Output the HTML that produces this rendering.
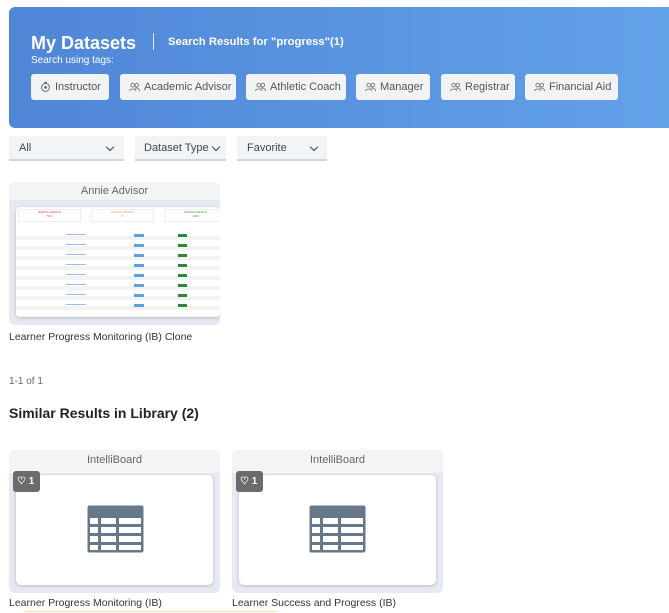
<!DOCTYPE html>
<html><head><style>
*{box-sizing:border-box;margin:0;padding:0}
body{width:669px;height:613px;overflow:hidden;background:#fff;font-family:"Liberation Sans",sans-serif;color:#333;position:relative}
.ab{position:absolute}
.banner{left:9px;top:7px;width:680px;height:121px;border-radius:6px;background:linear-gradient(90deg,#4f86d6,#64a2ea)}
.tag{position:absolute;top:74px;height:26px;background:#f2f3f5;border-radius:3px;font-size:11px;color:#555;line-height:27px;padding-left:9px;white-space:nowrap}
.tag svg{vertical-align:-2px;margin-right:4px}
.sel{position:absolute;top:136px;height:25px;background:#f3f4f6;border-bottom:2px solid #cfd5dd;font-size:11px;color:#444;line-height:24px;padding-left:10px}
.sel .ch{position:absolute;right:10px;top:8px;width:6px;height:6px;border-right:1.5px solid #444;border-bottom:1.5px solid #444;transform:rotate(45deg)}
.card{position:absolute;width:211px;height:143px;background:#e6e9f2;border-radius:6px;overflow:hidden}
.card .hd{height:18px;background:#f3f4f6;text-align:center;font-size:11px;color:#666;line-height:19px}
.inner{position:absolute;left:7px;top:25px;width:197px;height:110px;background:#fff;border-radius:5px;box-shadow:0 1px 3px rgba(0,0,0,.2)}
.heart{position:absolute;left:4px;top:21px;width:27px;height:21px;background:#6b6b6b;border-radius:3px;color:#fff;font-size:10px;font-weight:bold;line-height:21px;padding-left:4px}
.lbl{position:absolute;font-size:10.5px;color:#333;white-space:nowrap}
</style></head><body>
<div class="ab banner"></div>
<div class="ab" style="left:31px;top:33px;font-size:18px;font-weight:bold;color:#fff">My Datasets</div>
<div class="ab" style="left:153px;top:33px;width:1px;height:17px;background:#dfe9f7"></div>
<div class="ab" style="left:168px;top:36px;font-size:11.3px;font-weight:bold;color:#fff">Search Results for "progress"(1)</div>
<div class="ab" style="left:31px;top:55px;font-size:10px;color:#fff">Search using tags:</div>
<div class="tag" style="left:31px;width:78px"><svg width="11" height="11" viewBox="0 0 12 12"><circle cx="6" cy="7" r="4.3" fill="none" stroke="#666" stroke-width="1"/><rect x="4.5" y="1" width="3" height="1.5" fill="#666"/><circle cx="6" cy="7" r="1.5" fill="#666"/></svg>Instructor</div>
<div class="tag" style="left:120px;width:116px"><svg width="11" height="10" viewBox="0 0 12 10"><circle cx="4" cy="3" r="2" fill="none" stroke="#777"/><circle cx="8.5" cy="3" r="2" fill="none" stroke="#777"/><path d="M0.5 9.5c0-3 7-3 7 0M6 6.5c2-1 5.5 0 5.5 3" fill="none" stroke="#777"/></svg>Academic Advisor</div>
<div class="tag" style="left:246px;width:100px"><svg width="11" height="10" viewBox="0 0 12 10"><circle cx="4" cy="3" r="2" fill="none" stroke="#777"/><circle cx="8.5" cy="3" r="2" fill="none" stroke="#777"/><path d="M0.5 9.5c0-3 7-3 7 0M6 6.5c2-1 5.5 0 5.5 3" fill="none" stroke="#777"/></svg>Athletic Coach</div>
<div class="tag" style="left:356px;width:74px"><svg width="11" height="10" viewBox="0 0 12 10"><circle cx="4" cy="3" r="2" fill="none" stroke="#777"/><circle cx="8.5" cy="3" r="2" fill="none" stroke="#777"/><path d="M0.5 9.5c0-3 7-3 7 0M6 6.5c2-1 5.5 0 5.5 3" fill="none" stroke="#777"/></svg>Manager</div>
<div class="tag" style="left:441px;width:74px"><svg width="11" height="10" viewBox="0 0 12 10"><circle cx="4" cy="3" r="2" fill="none" stroke="#777"/><circle cx="8.5" cy="3" r="2" fill="none" stroke="#777"/><path d="M0.5 9.5c0-3 7-3 7 0M6 6.5c2-1 5.5 0 5.5 3" fill="none" stroke="#777"/></svg>Registrar</div>
<div class="tag" style="left:525px;width:93px"><svg width="11" height="10" viewBox="0 0 12 10"><circle cx="4" cy="3" r="2" fill="none" stroke="#777"/><circle cx="8.5" cy="3" r="2" fill="none" stroke="#777"/><path d="M0.5 9.5c0-3 7-3 7 0M6 6.5c2-1 5.5 0 5.5 3" fill="none" stroke="#777"/></svg>Financial Aid</div>

<div class="sel" style="left:9px;width:115px">All<span class="ch" style="right:11px"></span></div>
<div class="sel" style="left:135px;width:91px;padding-left:9px">Dataset Type<span class="ch" style="right:7px"></span></div>
<div class="sel" style="left:237px;width:90px">Favorite<span class="ch"></span></div>

<div class="card" style="left:9px;top:182px">
<div class="hd" style="font-size:11px">Annie Advisor</div>
<div class="ab" style="left:7px;top:25px;width:204px;height:110px;background:#fff;border-radius:4px;box-shadow:0 1px 3px rgba(0,0,0,.2);overflow:hidden">
<div class="ab" style="left:2px;top:2px;width:63px;height:13px;border:1px solid #eee;font-size:3px;color:#d44;text-align:center">ENROLLMENTS<br><span style="color:#d44">543</span></div>
<div class="ab" style="left:75px;top:2px;width:63px;height:13px;border:1px solid #eee;font-size:3px;color:#e9a33a;text-align:center">ENROLLMENTS<br>76</div>
<div class="ab" style="left:148px;top:2px;width:63px;height:13px;border:1px solid #eee;font-size:3px;color:#3a3;text-align:center">ENROLLMENTS<br>1008</div>
<div class="ab" style="left:0;top:23px;width:204px;height:87px;background:repeating-linear-gradient(180deg,#fff 0 6px,#f3f3f3 6px 10px)"></div>
<div class="ab" style="left:118px;top:27px;width:10px;height:75px;background:repeating-linear-gradient(180deg,#5aa0e0 0 3px,transparent 3px 10px)"></div>
<div class="ab" style="left:162px;top:27px;width:9px;height:75px;background:repeating-linear-gradient(180deg,#2a8a3a 0 3px,transparent 3px 10px)"></div>
<div class="ab" style="left:50px;top:27px;width:20px;height:75px;background:repeating-linear-gradient(180deg,#9bbbe8 0 1px,transparent 1px 10px)"></div>
</div>
</div>
<div class="lbl" style="left:9px;top:331px">Learner Progress Monitoring (IB) Clone</div>
<div class="lbl" style="left:9px;top:376px;font-size:10px;color:#666">1-1 of 1</div>
<div class="lbl" style="left:9px;top:405px;font-size:14px;font-weight:bold;color:#222">Similar Results in Library (2)</div>

<div class="card" style="left:9px;top:450px"><div class="hd" style="height:23px;line-height:21px">IntelliBoard</div><div class="inner"></div><div class="heart">♡ 1</div>
<svg class="ab" style="left:78px;top:55px" width="57" height="48" viewBox="0 0 57 48"><rect x="0.5" y="0.5" width="56" height="47" rx="2" fill="#66788a"/><g fill="#fff"><rect x="3" y="13" width="8" height="6"/><rect x="14" y="13" width="15" height="6"/><rect x="32" y="13" width="22" height="6"/><rect x="3" y="22" width="8" height="6"/><rect x="14" y="22" width="15" height="6"/><rect x="32" y="22" width="22" height="6"/><rect x="3" y="31" width="8" height="6"/><rect x="14" y="31" width="15" height="6"/><rect x="32" y="31" width="22" height="6"/><rect x="3" y="40" width="8" height="5"/><rect x="14" y="40" width="15" height="5"/><rect x="32" y="40" width="22" height="5"/></g></svg></div>
<div class="card" style="left:232px;top:450px"><div class="hd" style="height:23px;line-height:21px">IntelliBoard</div><div class="inner"></div><div class="heart">♡ 1</div>
<svg class="ab" style="left:77px;top:55px" width="57" height="48" viewBox="0 0 57 48"><rect x="0.5" y="0.5" width="56" height="47" rx="2" fill="#66788a"/><g fill="#fff"><rect x="3" y="13" width="8" height="6"/><rect x="14" y="13" width="15" height="6"/><rect x="32" y="13" width="22" height="6"/><rect x="3" y="22" width="8" height="6"/><rect x="14" y="22" width="15" height="6"/><rect x="32" y="22" width="22" height="6"/><rect x="3" y="31" width="8" height="6"/><rect x="14" y="31" width="15" height="6"/><rect x="32" y="31" width="22" height="6"/><rect x="3" y="40" width="8" height="5"/><rect x="14" y="40" width="15" height="5"/><rect x="32" y="40" width="22" height="5"/></g></svg></div>
<div class="lbl" style="left:9px;top:597px">Learner Progress Monitoring (IB)</div>
<div class="lbl" style="left:232px;top:597px">Learner Success and Progress (IB)</div>
<div class="ab" style="left:25px;top:611px;width:252px;height:1px;background:#f5e39a"></div>
</body></html>
